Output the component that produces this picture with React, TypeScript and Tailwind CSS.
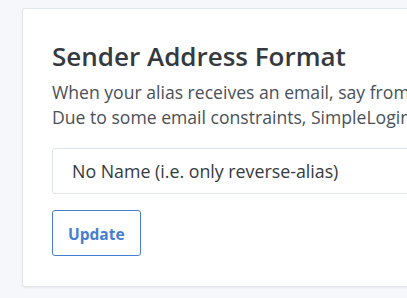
export default function App() {
  return (
    <div className="min-h-[298px] w-[407px] overflow-hidden bg-[#f5f7fb] pt-2 pl-[22px] font-['Open_Sans',sans-serif] text-[#495057]">
      <div className="w-[640px] rounded-[3px] border border-[#e0e5ec] bg-white px-[29px] pt-[31px] pb-[30px] shadow-[0_1px_2px_rgba(0,0,0,0.05)]">
        <h2 className="text-[26px] font-semibold leading-[32px] text-[#343a40]">Sender Address Format</h2>
        <p className="mt-[8px] whitespace-nowrap text-[17.6px] leading-[25px]">
          When your alias receives an email, say from John Doe
          <br />
          Due to some email constraints, SimpleLogin cannot keep
        </p>
        <div className="mt-[18px] flex h-[46px] items-center rounded-[3px] border border-[#e0e5ec] bg-white pl-[19px] text-[17.8px] text-[#343a40]">
          No Name (i.e. only reverse-alias)
        </div>
        <button className="mt-[16px] h-[46px] rounded-[3px] border border-[#467fcf] px-[15px] pt-[3px] text-[15.5px] font-bold text-[#467fcf]">
          Update
        </button>
      </div>
    </div>
  );
}
